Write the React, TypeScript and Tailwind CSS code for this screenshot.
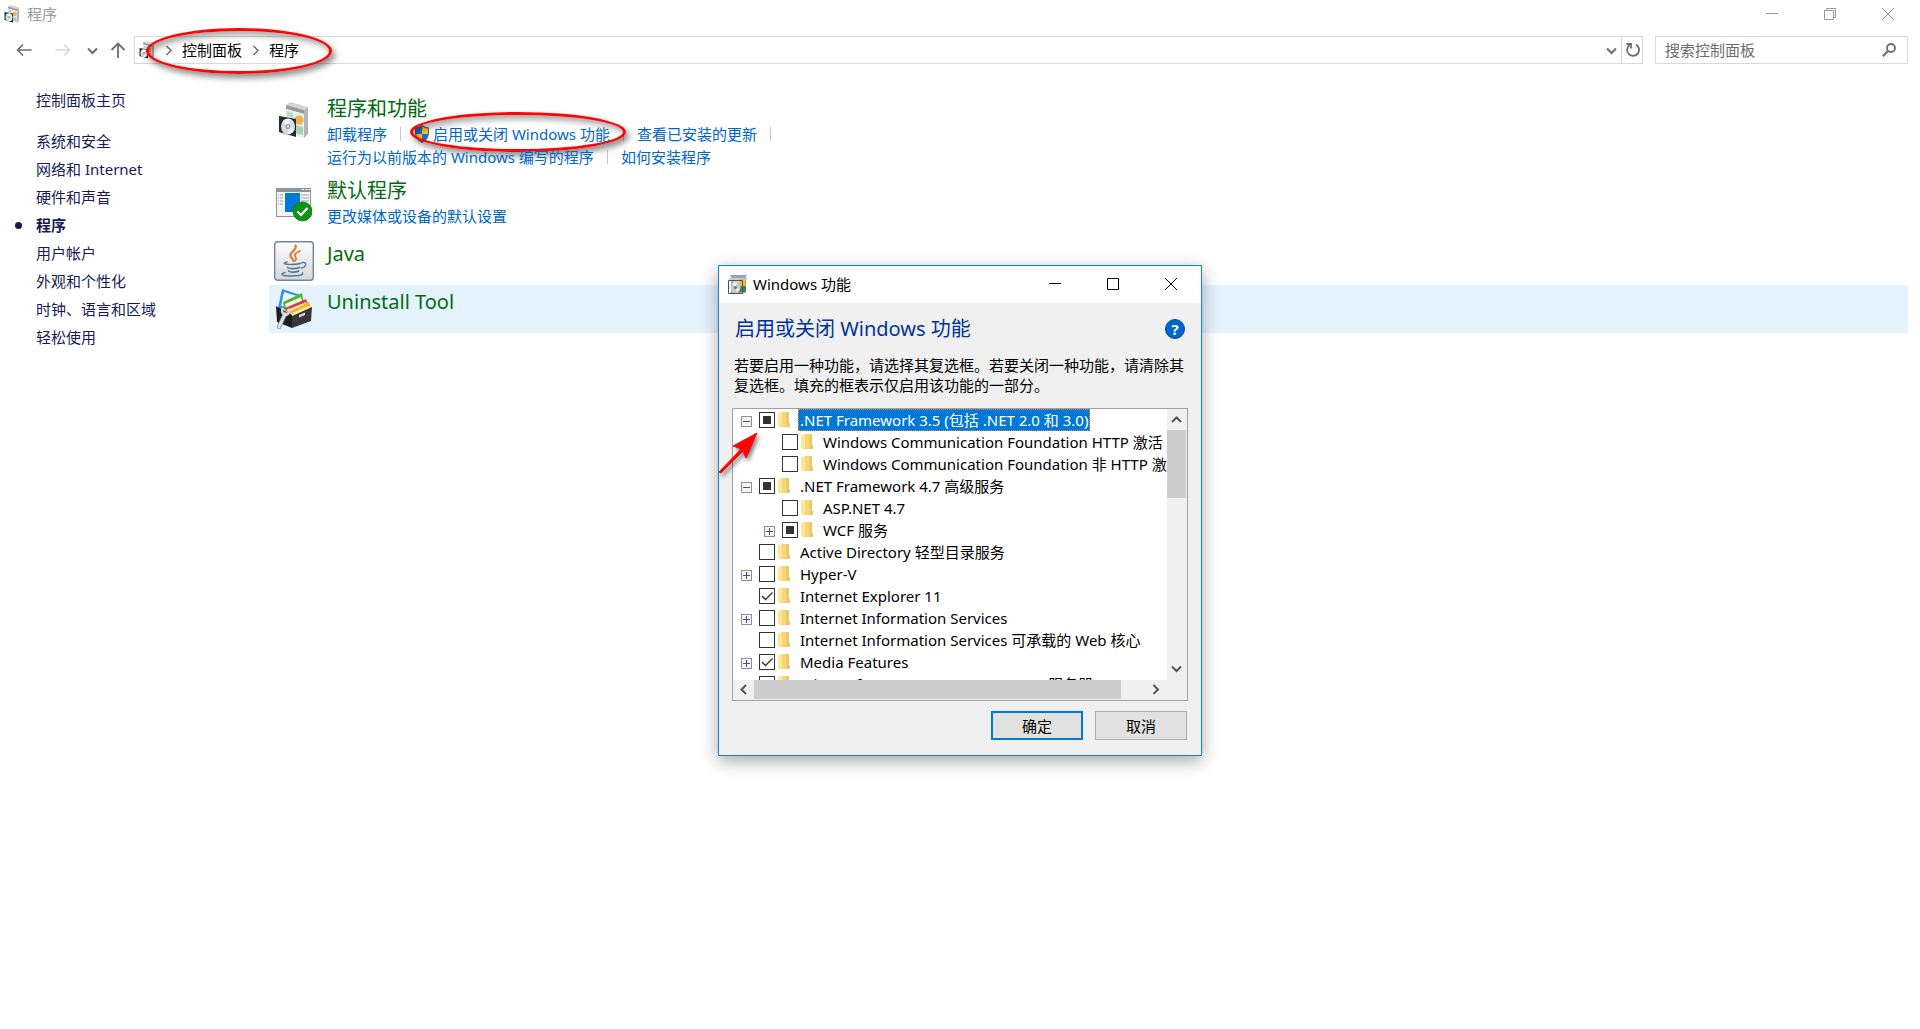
import React, { useEffect, useRef } from 'react';

interface ICategoryLink {
  label: string;
  shield?: boolean;
}

interface IFeature {
  label: string;
  level: number;
  state: 'off' | 'on' | 'partial';
  expander?: 'open' | 'closed';
  selected?: boolean;
}

const sidebarItems = ['系统和安全', '网络和 Internet', '硬件和声音', '程序', '用户帐户', '外观和个性化', '时钟、语言和区域', '轻松使用'];

const features: IFeature[] = [
  { label: '.NET Framework 3.5 (包括 .NET 2.0 和 3.0)', level: 0, state: 'partial', expander: 'open', selected: true },
  { label: 'Windows Communication Foundation HTTP 激活', level: 1, state: 'off' },
  { label: 'Windows Communication Foundation 非 HTTP 激活', level: 1, state: 'off' },
  { label: '.NET Framework 4.7 高级服务', level: 0, state: 'partial', expander: 'open' },
  { label: 'ASP.NET 4.7', level: 1, state: 'off' },
  { label: 'WCF 服务', level: 1, state: 'partial', expander: 'closed' },
  { label: 'Active Directory 轻型目录服务', level: 0, state: 'off' },
  { label: 'Hyper-V', level: 0, state: 'off', expander: 'closed' },
  { label: 'Internet Explorer 11', level: 0, state: 'on' },
  { label: 'Internet Information Services', level: 0, state: 'off', expander: 'closed' },
  { label: 'Internet Information Services 可承载的 Web 核心', level: 0, state: 'off' },
  { label: 'Media Features', level: 0, state: 'on', expander: 'closed' },
  { label: 'Microsoft Message Queue (MSMQ) 服务器', level: 0, state: 'off', expander: 'closed' },
];

// Software box with a disc case in front
const ProgramsIcon = ({ className }: { className: string }) => (
  <svg viewBox="0 0 30 36" className={className} aria-hidden="true">
    <path d="M7 3 11 0 29 5 25 8Z" fill="#d4d4d4" />
    <path d="M7 3 25 8V12L7 7Z" fill="#9a9a9a" />
    <path d="M25 8 29 5V32L25 36Z" fill="#b4b4b4" />
    <path d="M7 7 25 12V36L7 30Z" fill="#ececec" />
    <path d="M8 9 14 11V16L8 15Z" fill="#b9dcc4" />
    <circle cx="20" cy="18" r="4.500" fill="#f5b04c" />
    <path d="M16 23 24 25V33L16 31Z" fill="#a5d3b4" />
    <path d="M0 14 17 17V35L0 30Z" fill="#232c3a" />
    <ellipse cx="9" cy="24.500" rx="7" ry="8" fill="#d9dde1" />
    <path d="M9 24.500 4 19Q7 16 11 17ZM9 24.500 15 28Q13 32 9 32Z" fill="#f4f6f7" />
    <ellipse cx="9" cy="24.500" rx="2.300" ry="2.600" fill="#8f9aa5" />
    <ellipse cx="9" cy="24.500" rx="1" ry="1.200" fill="#fff" />
  </svg>
);

// Front view of the open box, shown in the dialog caption
const FeaturesIcon = () => (
  <svg viewBox="0 0 20 20" className="h-5 w-5" aria-hidden="true">
    <path d="M2 1H19L17 5H4Z" fill="#9c9cc4" />
    <path d="M1 4H19V6H1Z" fill="#c9c9dd" />
    <path d="M3 6H18V19H3Z" fill="#a5a9a8" />
    <path d="M11 5H17V12H11Z" fill="#f0bb3c" />
    <path d="M5 7H11V12H5Z" fill="#d8e0d8" />
    <path d="M10 12H18V18H10Z" fill="#3f8550" />
    <path d="M.5 6.500H14.500V19.500H.5Z" fill="none" stroke="#4d5553" />
    <ellipse cx="7.500" cy="13.500" rx="5" ry="5.500" fill="#c4cac8" />
    <path d="M7.500 13.500 4 9.500 9 8.500ZM7.500 13.500 11.500 15 9 18.500Z" fill="#f1f3f2" />
    <circle cx="7.500" cy="13.500" r="1.500" fill="#68726f" />
  </svg>
);

const DefaultProgramsIcon = () => (
  <svg viewBox="0 0 36 34" className="mt-[6px] h-[34px] w-9" aria-hidden="true">
    <path d="M0 0H35V29H0Z" fill="#8d9599" />
    <path d="M1 4H34V28H1Z" fill="#f4f5f5" />
    <path d="M26 1.500H28M29.500 1.500H31.500M32.500 1.500H34" stroke="#fff" />
    <path d="M2 7H7M2 10H7M2 13H7M2 16H7" stroke="#9aa1a5" strokeDasharray="1 1 3 2" />
    <path d="M9 5H24V24H9Z" fill="#0078d7" />
    <path d="M25 7H33M25 10H33M25 13H33M25 16H33" stroke="#9aa1a5" />
    <circle cx="26.500" cy="23.500" r="9.500" fill="#0f9318" stroke="#08700f" strokeWidth="0.800" />
    <path d="M21.500 23.500 25 27 31.500 20" fill="none" stroke="#fff" strokeWidth="2.200" />
  </svg>
);

const JavaIcon = () => (
  <svg viewBox="0 0 40 40" className="h-10 w-10" aria-hidden="true">
    <defs>
      <linearGradient id="java-tile" x1="0" y1="0" x2="0" y2="1">
        <stop offset="0" stopColor="#fdfdfd" />
        <stop offset="1" stopColor="#d5d8db" />
      </linearGradient>
    </defs>
    <rect x="0.700" y="0.700" width="38.600" height="38.600" rx="3" fill="url(#java-tile)" stroke="#71869b" strokeWidth="1.400" />
    <g fill="none" strokeLinecap="round">
      <path d="M21.500 4.500C24 9 15 11 16.500 15C17.200 17 19 18 19.500 20" stroke="#e8762c" strokeWidth="2.200" />
      <path d="M26 10C21 12 20 14 21.500 16C22.500 17.500 22 19 21 20" stroke="#e8762c" strokeWidth="1.700" />
      <path d="M13 21C8 22 10 23.500 18 23.500C22 23.500 25 23 27 22.300" stroke="#537b9b" strokeWidth="1.500" />
      <path d="M28 21.500C33.500 20.500 32.500 26 27.500 27" stroke="#537b9b" strokeWidth="1.500" />
      <path d="M13.500 26.500C15 28 22 28 25.500 26.500M14.500 30C16 31.500 22 31.500 24.500 30" stroke="#537b9b" strokeWidth="1.700" />
      <path d="M11 31.500C5 33 8 35 17 35C25 35 30 34 28.500 32" stroke="#537b9b" strokeWidth="1.500" />
    </g>
  </svg>
);

const UninstallToolIcon = () => (
  <svg viewBox="0 0 38 40" className="h-10 w-[38px]" aria-hidden="true">
    <path d="M7 0 25 6 20 22 3 19Z" fill="#2a93dc" />
    <path d="M9 3 22 7 18 19 6 17Z" fill="#e8f5fc" />
    <path d="M8 13 27 4 29 16 10 22Z" fill="#53b52a" />
    <path d="M10 15 26 8 28 16 12 22Z" fill="#eef8e6" />
    <path d="M10 19 31 10 34 18 14 26Z" fill="#dd3c35" />
    <path d="M12 21 31 13 33 18 14 26Z" fill="#fbe4e1" />
    <path d="M13 23 34 13 36 19 17 28Z" fill="#f5b81c" />
    <path d="M15 25 34 17 36 20 17 28Z" fill="#fff3bd" />
    <path d="M1 17 17 26V39L2 33Z" fill="#1e1e1e" />
    <path d="M17 27 37 18 36 32 17 39Z" fill="#363636" />
    <path d="M24 26 30 23.500V26L24 28.500Z" fill="#d9d9d9" />
    <path d="M10 25 4 38" stroke="#8a8f94" strokeWidth="4.400" strokeLinecap="round" />
    <path d="M10 25 4 38" stroke="#e2e5e8" strokeWidth="2.800" strokeLinecap="round" />
    <path d="M8 19C6 23 8 26 11 26C14 25 15 22 13 20" fill="none" stroke="#d5d9dc" strokeWidth="2.600" />
  </svg>
);

const ShieldIcon = () => (
  <svg viewBox="0 0 16 18" className="mr-[3px] h-[18px] w-4" aria-hidden="true">
    <path d="M8 0Q11 2 15 2.500V8Q15 14 8 18Q1 14 1 8V2.500Q5 2 8 0Z" fill="#51606d" />
    <path d="M8 1.500V9H2V3.500Q5.500 3 8 1.500Z" fill="#1f74cf" />
    <path d="M8 1.500Q10.500 3 14 3.500V9H8Z" fill="#fbc62c" />
    <path d="M2 9H8V16.600Q2.500 13.500 2 9Z" fill="#fbc62c" />
    <path d="M14 9H8V16.600Q13.500 13.500 14 9Z" fill="#1f74cf" />
  </svg>
);

const FolderIcon = () => (
  <svg viewBox="0 0 12 16" className="h-4 w-3" aria-hidden="true">
    <path d="M3 0H11V11H12V15H3Z" fill="#f5d778" />
    <path d="M8 0H11V11H12V15H8Z" fill="#edc864" />
    <path d="M0 0 4 2V13L3 16 0 14Z" fill="#fde69c" />
  </svg>
);

const Chevron = ({ dir, className = '' }: { dir: 'up' | 'down' | 'left' | 'right'; className?: string }) => {
  const paths = {
    up: 'M1 8 5.500 3.500 10 8',
    down: 'M1 3.500 5.500 8 10 3.500',
    left: 'M8 1 3.500 5.500 8 10',
    right: 'M3.500 1 8 5.500 3.500 10',
  };
  return (
    <svg viewBox="0 0 11 11" className={`h-[11px] w-[11px] ${className}`} fill="none" stroke="currentColor" aria-hidden="true">
      <path d={paths[dir]} />
    </svg>
  );
};

const WindowButtons = ({ restore, className }: { restore?: boolean; className: string }) => (
  <div className={`flex self-stretch ${className}`}>
    <button aria-label="最小化" className="flex w-[58px] items-center justify-center">
      <svg className="h-3 w-3" viewBox="0 0 12 12" stroke="currentColor"><path d="M0 5.500H12" /></svg>
    </button>
    <button aria-label={restore ? '向下还原' : '最大化'} className="flex w-[58px] items-center justify-center">
      <svg className="h-3 w-3" viewBox="0 0 12 12" stroke="currentColor" fill="none">
        {restore ? <path d="M.5 2.500H9.500V11.500H.5ZM2.500 2.500V.5H11.500V9.500H9.500" /> : <path d="M.5 .5H11.500V11.500H.5Z" />}
      </svg>
    </button>
    <button aria-label="关闭" className="flex w-[58px] items-center justify-center">
      <svg className="h-3 w-3" viewBox="0 0 12 12" stroke="currentColor"><path d="M0 0 12 12M12 0 0 12" /></svg>
    </button>
  </div>
);

// Red hand-drawn style ring that marks a step
const Ring = ({ className }: { className: string }) => (
  <div className={`pointer-events-none absolute rounded-[50%] border-[3px] border-[#fb0505] shadow-[3px_4px_6px_rgba(0,0,0,0.45),inset_3px_4px_6px_rgba(0,0,0,0.35)] ${className}`} />
);

const AddressBar = () => (
  <div className="flex h-7 items-center pr-3">
    <nav className="flex w-[134px] shrink-0 items-center pl-4 text-[#6d6d6d]">
      <button aria-label="后退">
        <svg className="h-4 w-4" viewBox="0 0 16 16" fill="none" stroke="currentColor" strokeWidth="1.600"><path d="M15.500 8H1.500M7 2.500 1.500 8 7 13.500" /></svg>
      </button>
      <button aria-label="前进" className="ml-[23px] text-[#d6d6d6]">
        <svg className="h-4 w-4" viewBox="0 0 16 16" fill="none" stroke="currentColor" strokeWidth="1.600"><path d="M.5 8H14.500M9 2.500 14.500 8 9 13.500" /></svg>
      </button>
      <button aria-label="最近位置" className="ml-4 flex w-[11px] justify-center">
        <Chevron dir="down" className="w-[9px] stroke-2" />
      </button>
      <button aria-label="上移" className="ml-3">
        <svg className="h-4 w-4" viewBox="0 0 16 16" fill="none" stroke="currentColor" strokeWidth="1.800"><path d="M8 16V1.500M1.500 8 8 1.500 14.500 8" /></svg>
      </button>
    </nav>
    <div className="relative flex h-7 flex-1 items-center border border-[#d9d9d9] pl-1">
      <ProgramsIcon className="h-[18px] w-4" />
      <Chevron dir="right" className="ml-2 stroke-[1.5] text-[#6d6d6d]" />
      <a href="#home" className="ml-2">控制面板</a>
      <Chevron dir="right" className="ml-2 stroke-[1.5] text-[#6d6d6d]" />
      <a href="#programs" className="ml-2">程序</a>
      <button aria-label="历史记录" className="ml-auto flex h-full w-[19px] items-center justify-center text-[#6d6d6d]">
        <Chevron dir="down" className="stroke-2" />
      </button>
      <button aria-label="刷新" className="flex h-full w-[21px] items-center justify-center border-l border-[#d9d9d9] pl-px text-[#6d6d6d]">
        <svg className="h-4 w-4" viewBox="0 0 16 16" fill="none" stroke="currentColor" strokeWidth="1.800">
          <path d="M11 2.500A6 6 0 1 1 4.500 3M1.500 2H6V6.500" />
        </svg>
      </button>
      <Ring className="-top-[9px] left-[11px] h-[46px] w-[186px]" />
    </div>
    <label className="ml-3 flex h-7 w-[253px] items-center border border-[#d9d9d9] pr-[11px] pl-[9px] text-[#6d6d6d]">
      <input type="text" aria-label="搜索" placeholder="搜索控制面板" className="min-w-0 flex-1 outline-none placeholder:text-[#6d6d6d]" />
      <svg className="h-[14px] w-[14px]" viewBox="0 0 14 14" fill="none" stroke="currentColor" strokeWidth="1.800">
        <circle cx="9" cy="5" r="4" />
        <path d="M6 8 .8 13.200" strokeWidth="2.200" />
      </svg>
    </label>
  </div>
);

const Separator = () => <span className="mx-[13px] h-[14px] w-px bg-[#c8c8c8]" />;

const CategoryHeading = ({ children }: { children: React.ReactNode }) => (
  <h2 className="text-[20px] leading-[26px] text-[#006b12]">
    <a href="#category">{children}</a>
  </h2>
);

const LinkRow = ({ links, trailing }: { links: ICategoryLink[]; trailing?: boolean }) => (
  <div className="flex h-[23px] items-center text-[15px] text-[#0066cc]">
    {links.map((link, i) => (
      <React.Fragment key={link.label}>
        {i > 0 && <Separator />}
        <a href="#task" className="relative flex items-center whitespace-nowrap">
          {link.shield && <ShieldIcon />}
          {link.label}
          {link.shield && <Ring className="-top-3 -left-1 h-10 w-[216px]" />}
        </a>
      </React.Fragment>
    ))}
    {trailing && <Separator />}
  </div>
);

const Category = ({ icon, className, children }: { icon: React.ReactNode; className: string; children: React.ReactNode }) => (
  <section className={`flex ${className}`}>
    <div className="flex h-12 w-[50px] shrink-0 items-center justify-center">{icon}</div>
    <div className="pl-2">{children}</div>
  </section>
);

const FeatureCheckbox = ({ label, state }: { label: string; state: IFeature['state'] }) => {
  const ref = useRef<HTMLInputElement>(null);
  useEffect(() => {
    if (ref.current) ref.current.indeterminate = state === 'partial';
  }, [state]);

  return (
    <span className="grid h-4 w-4 shrink-0 place-items-center">
      <input
        ref={ref}
        type="checkbox"
        aria-label={label}
        defaultChecked={state === 'on'}
        className="col-start-1 row-start-1 h-4 w-4 appearance-none border border-[#333] bg-white"
      />
      {state === 'partial' && <span className="pointer-events-none col-start-1 row-start-1 h-2 w-2 bg-[#333]" />}
      {state === 'on' && (
        <svg viewBox="0 0 16 16" className="pointer-events-none col-start-1 row-start-1 h-4 w-4" fill="none" stroke="#333" strokeWidth="1.400">
          <path d="M3 8 6.500 11.500 13.500 4.500" />
        </svg>
      )}
    </span>
  );
};

const FeatureRow = ({ feature }: { feature: IFeature }) => (
  <li className={`flex h-[22px] items-center ${feature.level ? 'pl-[31px]' : 'pl-2'}`}>
    <span className="flex w-[18px] shrink-0 pt-[2px]">
      {feature.expander && (
        <button aria-label={feature.expander === 'open' ? '折叠' : '展开'} className="h-[11px] w-[11px] border border-[#919191] bg-[#f4f4f4]">
          <svg viewBox="0 0 9 9" className="h-[9px] w-[9px]" stroke="#3556a5">
            <path d={feature.expander === 'open' ? 'M1 4.500H8' : 'M1 4.500H8M4.500 1V8'} />
          </svg>
        </button>
      )}
    </span>
    <FeatureCheckbox label={feature.label} state={feature.state} />
    <span className="ml-[3px] shrink-0"><FolderIcon /></span>
    <span
      className={`ml-2 h-[22px] border px-px leading-5 whitespace-nowrap ${
        feature.selected ? 'border-dotted border-[#e08a3c] bg-[#0078d7] text-white' : 'border-transparent'
      }`}
    >
      {feature.label}
    </span>
  </li>
);

const FeatureTree = () => (
  <div className="mt-3 grid h-[293px] grid-cols-[1fr_20px] grid-rows-[1fr_20px] border border-[#a0a0a0] bg-[#f0f0f0]">
    <ul className="min-h-0 min-w-0 overflow-hidden bg-white">
      {features.map((feature) => <FeatureRow key={feature.label} feature={feature} />)}
    </ul>
    <div className="mr-px flex flex-col items-center text-[#555]">
      <button aria-label="向上滚动" className="flex h-[21px] items-center"><Chevron dir="up" className="stroke-2" /></button>
      <div className="h-[68px] w-full bg-[#cdcdcd]" />
      <button aria-label="向下滚动" className="mt-auto flex h-6 items-center"><Chevron dir="down" className="stroke-2" /></button>
    </div>
    <div className="mb-px flex items-center text-[#555]">
      <button aria-label="向左滚动" className="flex w-[21px] justify-center"><Chevron dir="left" className="stroke-2" /></button>
      <div className="h-full w-[367px] bg-[#cdcdcd]" />
      <button aria-label="向右滚动" className="ml-auto flex w-[23px] justify-center"><Chevron dir="right" className="stroke-2" /></button>
    </div>
  </div>
);

const FeaturesDialog = () => (
  <div
    role="dialog"
    aria-label="Windows 功能"
    className="absolute top-[265px] left-1/2 w-[484px] -translate-x-1/2 border border-[#1a7fd0] bg-[#f0f0f0] shadow-[0_5px_16px_rgba(0,0,0,0.35)]"
  >
    <header className="flex h-[37px] items-center bg-white pb-[2px] pl-[9px]">
      <FeaturesIcon />
      <span className="ml-[5px]">Windows 功能</span>
      <WindowButtons className="mr-px ml-auto" />
    </header>
    <div className="px-[13px] pb-[15px]">
      <div className="flex h-[52px] items-center justify-between px-[3px]">
        <h1 className="text-[20px] text-[#003399]">启用或关闭 Windows 功能</h1>
        <button aria-label="帮助" className="h-5 w-5 rounded-full border border-[#004a8f] bg-[#0066cc] text-[15px] leading-[18px] font-bold text-white">?</button>
      </div>
      <p className="pl-[2px] leading-5">
        若要启用一种功能，请选择其复选框。若要关闭一种功能，请清除其复选框。填充的框表示仅启用该功能的一部分。
      </p>
      <div className="pt-px"><FeatureTree /></div>
      <div className="mt-[10px] flex justify-end gap-3 pr-px">
        <button className="h-[29px] w-[92px] border-2 border-[#0078d7] bg-[#e1e1e1]">确定</button>
        <button className="h-[29px] w-[92px] border border-[#adadad] bg-[#e1e1e1]">取消</button>
      </div>
    </div>
    <svg viewBox="0 0 40 42" className="pointer-events-none absolute top-[166px] -left-px h-[42px] w-10 drop-shadow-[2px_3px_2px_rgba(0,0,0,0.5)]" aria-hidden="true">
      <path d="M1 40 23 17 15 14 39 1 28 26 25 19 3 41Z" fill="#fb0505" stroke="#fb0505" />
    </svg>
  </div>
);

const App = () => {
  return (
    <div className="relative min-h-screen bg-white font-['Noto_Sans','Noto_Sans_CJK_SC',sans-serif] text-[15px] leading-5 text-black">
      <header className="flex h-7 items-center pl-1 text-[#999]">
        <ProgramsIcon className="h-[18px] w-4" />
        <span className="ml-[7px]">程序</span>
        <WindowButtons restore className="mr-[3px] ml-auto" />
      </header>
      <div className="mt-2"><AddressBar /></div>

      <div className="flex pr-3">
        <aside className="w-[269px] shrink-0 pt-[26px] pl-9 text-[#151c55]">
          <a href="#home" className="block">控制面板主页</a>
          <ul className="mt-[17px]">
            {sidebarItems.map((item) => (
              <li key={item} className="relative flex h-7 items-center">
                {item === '程序' && <span className="absolute -left-[21px] h-[7px] w-[7px] rounded-full bg-[#151c55]" />}
                <a href="#section" className={item === '程序' ? 'font-bold' : ''}>{item}</a>
              </li>
            ))}
          </ul>
        </aside>

        <main className="flex-1 pt-8">
          <Category className="h-[82px]" icon={<ProgramsIcon className="h-9 w-[30px]" />}>
            <CategoryHeading>程序和功能</CategoryHeading>
            <LinkRow
              trailing
              links={[{ label: '卸载程序' }, { label: '启用或关闭 Windows 功能', shield: true }, { label: '查看已安装的更新' }]}
            />
            <LinkRow links={[{ label: '运行为以前版本的 Windows 编写的程序' }, { label: '如何安装程序' }]} />
          </Category>
          <Category className="h-[59px]" icon={<DefaultProgramsIcon />}>
            <CategoryHeading>默认程序</CategoryHeading>
            <LinkRow links={[{ label: '更改媒体或设备的默认设置' }]} />
          </Category>
          <Category className="h-12" icon={<JavaIcon />}>
            <div className="pt-1"><CategoryHeading>Java</CategoryHeading></div>
          </Category>
          <Category className="h-12 bg-[#e5f3ff]" icon={<UninstallToolIcon />}>
            <div className="pt-1"><CategoryHeading>Uninstall Tool</CategoryHeading></div>
          </Category>
        </main>
      </div>

      <FeaturesDialog />
    </div>
  );
};

export default App;
